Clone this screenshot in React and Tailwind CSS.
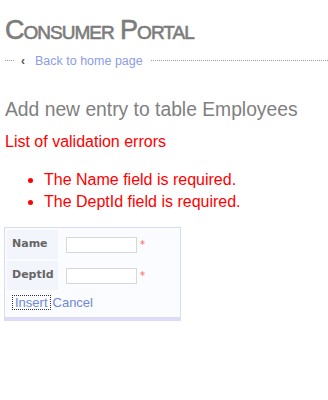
import React from 'react';

function App() {
  const font = { fontFamily: '"Liberation Sans", Arial, sans-serif' };
  return (
    <div className="bg-white min-h-[400px] w-[328px] text-[#808080]" style={font}>
      <div className="px-[5px] pt-[14px]">
        <h1 className="text-[27px] leading-[32px] font-normal [font-variant:small-caps] tracking-[-1px] text-[#7c7c7c] [-webkit-text-stroke:0.6px_#7c7c7c]">
          Consumer Portal
        </h1>
        <div className="relative h-[20px] mt-[2px]">
          <div className="absolute left-0 right-[-5px] top-[12px] border-b border-dotted border-[#999]" />
          <div className="relative inline-flex items-center bg-white ml-[10px] pl-[6px] pr-[8px] h-[20px]">
            <span className="text-[#555] text-[12px] font-bold mr-[10px]">‹</span>
            <a href="#" className="text-[12.5px] text-[#8c9ce8]">Back to home page</a>
          </div>
        </div>
      </div>
      <div className="px-[5px] mt-[30px]">
        <h2 className="text-[19.3px] leading-[24px] text-[#808080]">Add new entry to table Employees</h2>
        <div className="text-[16px] leading-[20px] text-[#ff0000] mt-[10px]">List of validation errors</div>
        <ul className="list-disc text-[16px] leading-[22px] text-[#ff0000] pl-[39px] mt-[17px] marker:text-[#ff0000]">
          <li>The Name field is required.</li>
          <li>The DeptId field is required.</li>
        </ul>
      </div>
      <div className="ml-[4px] mt-[14px] w-[177px] border border-[#d4dcf8] border-b-[4px] border-b-[#dcdcf8] bg-[#fbfcff] p-[2px]" style={{ fontFamily: '"DejaVu Sans", sans-serif' }}>
        <div className="flex items-center h-[29px]">
          <div className="w-[51px] h-full bg-[#f3f5fc] flex items-center pl-[5px] text-[11px] font-bold text-[#666]">Name</div>
          <input className="ml-[8px] w-[71px] h-[16px] border border-[#d8d8d8] bg-white" />
          <span className="ml-[3px] text-[#ff6060] text-[10px]">*</span>
        </div>
        <div className="flex items-center h-[29px] mt-[2px]">
          <div className="w-[51px] h-full bg-[#f3f5fc] flex items-center pl-[5px] text-[11px] font-bold text-[#666]">DeptId</div>
          <input className="ml-[8px] w-[71px] h-[16px] border border-[#d8d8d8] bg-white" />
          <span className="ml-[3px] text-[#ff6060] text-[10px]">*</span>
        </div>
        <div className="flex items-center h-[25px] pl-[5px] text-[13px] text-[#6f88d8]" style={{ fontFamily: '"Liberation Sans", Arial, sans-serif' }}>
          <span className="border border-dotted border-[#333] px-[2px] h-[15px] leading-[13px]">Insert</span>
          <span className="ml-[2px]">Cancel</span>
        </div>
      </div>
    </div>
  );
}

export default App;
